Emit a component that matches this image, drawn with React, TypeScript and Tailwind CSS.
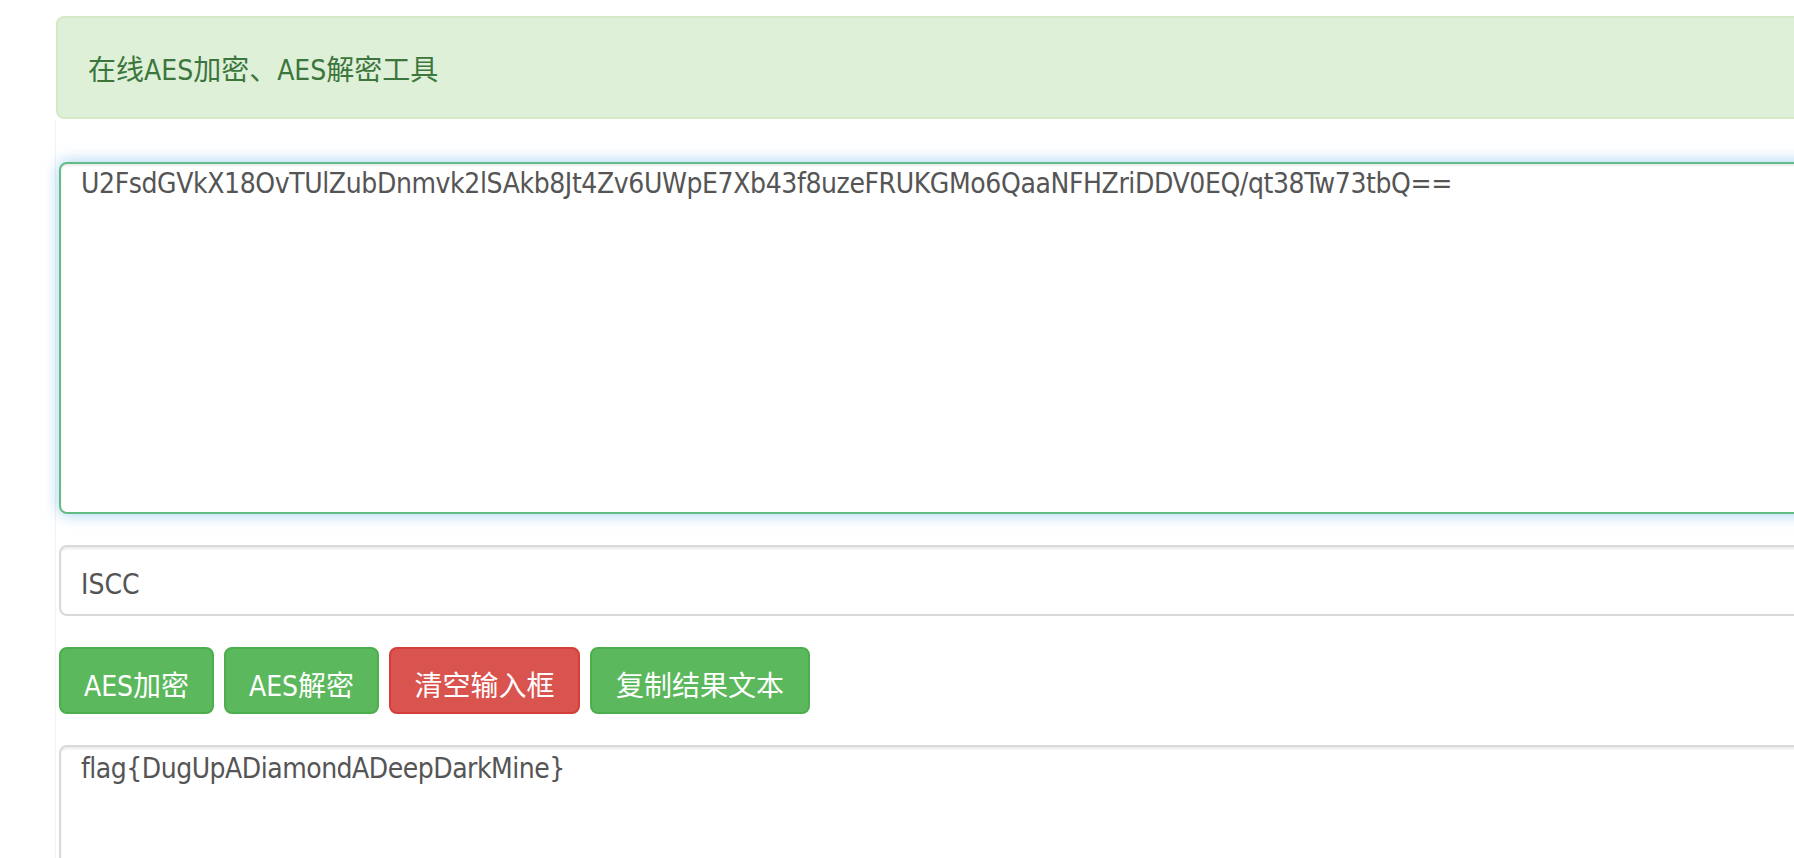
import { useState } from 'react';

const CIPHER =
  'U2FsdGVkX18OvTUlZubDnmvk2lSAkb8Jt4Zv6UWpE7Xb43f8uzeFRUKGMo6QaaNFHZriDDV0EQ/qt38Tw73tbQ==';

const buttons = [
  { label: 'AES加密', w: 'w-[155px]', red: false },
  { label: 'AES解密', w: 'w-[155px]', red: false },
  { label: '清空输入框', w: 'w-[191px]', red: true },
  { label: '复制结果文本', w: 'w-[220px]', red: false },
];

export default function App() {
  const [input, setInput] = useState(CIPHER);
  const [key, setKey] = useState('ISCC');
  const [output, setOutput] = useState('flag{DugUpADiamondADeepDarkMine}');

  return (
    <div className="w-[1794px] h-[858px] overflow-hidden bg-white font-['DejaVu_Sans_Condensed','DejaVu_Sans','Noto_Sans_CJK_SC',sans-serif] text-[28px] text-[#555]">
      <div className="w-[1900px] pl-[55px] pt-[16px]">
        {/* title alert */}
        <div className="ml-px flex h-[103px] items-center rounded-[8px] border-2 border-[#d6e9c6] bg-[#dff0d8] px-[30px] pt-[7px] text-[#3c763d]">
          在线AES加密、AES解密工具
        </div>

        <div className="border-l border-[#f3f3f3] pl-[3px] pt-[43px]">
          <textarea
            className="block h-[352px] w-full resize-none rounded-[8px] border-2 border-[#62bd85] bg-white px-5 pt-0 leading-[40px] tracking-[-0.4px] text-[#555] shadow-[inset_0_2px_2px_rgba(0,0,0,0.075),0_0_16px_rgba(102,175,233,0.6)] outline-none"
            value={input}
            onChange={(e) => setInput(e.target.value)}
          />

          <input
            className="mt-[31px] block h-[71px] w-full rounded-[8px] border-2 border-[#d9d9d9] bg-white px-5 pt-[8px] text-[#555] shadow-[inset_0_2px_2px_rgba(0,0,0,0.075)] outline-none"
            value={key}
            onChange={(e) => setKey(e.target.value)}
          />

          <div className="mt-[31px] flex gap-[10px]">
            {buttons.map((b) => (
              <button
                key={b.label}
                className={`${b.w} flex h-[67px] items-center justify-center rounded-[8px] border-2 pt-[12px] leading-[40px] text-white ${
                  b.red ? 'border-[#d43f3a] bg-[#d9534f]' : 'border-[#4cae4c] bg-[#5cb85c]'
                }`}
              >
                {b.label}
              </button>
            ))}
          </div>

          <textarea
            className="mt-[31px] block h-[220px] w-full resize-none rounded-[8px] border-2 border-[#d9d9d9] bg-white px-5 pt-[2px] leading-[40px] tracking-[-0.5px] text-[#555] shadow-[inset_0_2px_2px_rgba(0,0,0,0.075)] outline-none"
            value={output}
            onChange={(e) => setOutput(e.target.value)}
          />
        </div>
      </div>
    </div>
  );
}
